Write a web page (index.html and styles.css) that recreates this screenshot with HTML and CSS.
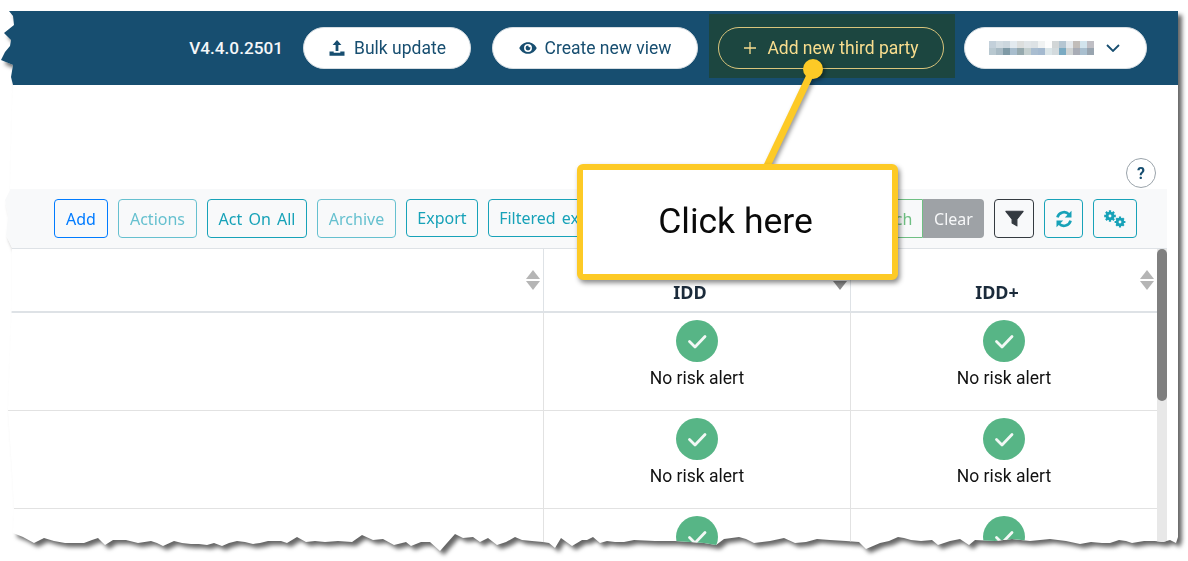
FILE: index.html
```html
<!DOCTYPE html>
<html lang="en">
<head>
<meta charset="utf-8">
<title>Add new third party</title>
<link rel="stylesheet" href="styles.css">
</head>
<body>
<div class="shot">
  <div class="paper">
    <div class="sheet">
      <header class="topbar">
        <span class="version">V4.4.0.2501</span>
        <button class="pill pill-bulk">
          <svg class="pill-icon" viewBox="0 0 18 18" width="18" height="18"><path d="M9 1 4.600 6h3v6h2.800V6h3zM1.500 12.500h4.200v1.200h6.600v-1.200h4.200v4.300h-15z"/></svg>
          Bulk update
        </button>
        <button class="pill pill-view">
          <svg class="pill-icon" viewBox="0 0 20 14" width="18" height="14"><path fill-rule="evenodd" d="M10 .5C5.600.5 2 3.300.3 7 2 10.700 5.600 13.500 10 13.500s8-2.800 9.700-6.500C18 3.300 14.400.5 10 .5zm0 10.900a4.400 4.400 0 1 1 0-8.800 4.400 4.400 0 0 1 0 8.800zM10 4.300a2.700 2.700 0 1 0 2.700 2.700c0-.4-.1-.8-.3-1.100a1.300 1.300 0 0 1-1.900-1.500c-.2-.1-.3-.1-.5-.1z"/></svg>
          Create new view
        </button>
        <div class="spotlight">
          <button class="pill pill-add">
            <svg viewBox="0 0 14 14" width="14" height="14"><path d="M7 1v12M1 7h12" fill="none" stroke="currentColor" stroke-width="1.300"/></svg>
            Add new third party
          </button>
        </div>
        <button class="pill pill-user">
          <svg class="mosaic" viewBox="0 0 15 2" width="106" height="14" shape-rendering="crispEdges" aria-hidden="true">
            <rect x="0" y="0" width="1" height="1" fill="#c3d0da"/><rect x="1" y="0" width="1" height="1" fill="#d2dce2"/><rect x="2" y="0" width="1" height="1" fill="#ccd7de"/><rect x="3" y="0" width="1" height="1" fill="#e3eaef"/><rect x="4" y="0" width="1" height="1" fill="#dcdedd"/><rect x="5" y="0" width="1" height="1" fill="#e0e5e8"/><rect x="6" y="0" width="1" height="1" fill="#dde2e5"/><rect x="7" y="0" width="1" height="1" fill="#f0f2f2"/><rect x="8" y="0" width="1" height="1" fill="#fdfdfd"/><rect x="9" y="0" width="1" height="1" fill="#d2d6d7"/><rect x="10" y="0" width="1" height="1" fill="#b5c6d2"/><rect x="11" y="0" width="1" height="1" fill="#e3e8ec"/><rect x="12" y="0" width="1" height="1" fill="#c2bdb9"/><rect x="13" y="0" width="1" height="1" fill="#d2e4ed"/><rect x="14" y="0" width="1" height="1" fill="#bfbec4"/>
            <rect x="0" y="1" width="1" height="1" fill="#b8c8d0"/><rect x="1" y="1" width="1" height="1" fill="#a8bac4"/><rect x="2" y="1" width="1" height="1" fill="#7f9aa6"/><rect x="3" y="1" width="1" height="1" fill="#a8bdcd"/><rect x="4" y="1" width="1" height="1" fill="#96a9ae"/><rect x="5" y="1" width="1" height="1" fill="#c4cfcf"/><rect x="6" y="1" width="1" height="1" fill="#a9bdd0"/><rect x="7" y="1" width="1" height="1" fill="#a4b9cf"/><rect x="8" y="1" width="1" height="1" fill="#dbe5e8"/><rect x="9" y="1" width="1" height="1" fill="#d3dadd"/><rect x="10" y="1" width="1" height="1" fill="#7aaac2"/><rect x="11" y="1" width="1" height="1" fill="#cfd3d3"/><rect x="12" y="1" width="1" height="1" fill="#a8acb5"/><rect x="13" y="1" width="1" height="1" fill="#a9bfcf"/><rect x="14" y="1" width="1" height="1" fill="#98a4af"/>
          </svg>
          <svg class="chevron" viewBox="0 0 14 8" width="14" height="8"><path d="M1 1l6 6 6-6" fill="none" stroke="#174e70" stroke-width="1.800"/></svg>
        </button>
      </header>

      <div class="main">
        <div class="help-row"><span class="help">?</span></div>

        <div class="toolbar">
          <button class="tb tb-primary tb-add">Add</button>
          <button class="tb tb-info is-off tb-actions">Actions</button>
          <button class="tb tb-info tb-all">Act On All</button>
          <button class="tb tb-info is-off tb-actions">Archive</button>
          <button class="tb tb-info tb-short tb-export">Export</button>
          <button class="tb tb-info tb-short tb-filtered">Filtered export</button>
          <div class="search-group">
            <button class="tb tb-search">Search</button>
            <button class="tb tb-clear">Clear</button>
          </div>
          <button class="tb tb-dark tb-icon">
            <svg viewBox="0 0 18 18" width="19" height="19"><path d="M.8 2.200h16.400L11.300 9.600V16L6.700 13.200V9.600z" fill="#343a40" stroke="#343a40" stroke-linejoin="round"/></svg>
          </button>
          <button class="tb tb-info tb-icon tb-refresh">
            <svg viewBox="0 0 18 18" width="18" height="18" fill="none" stroke="#17a2b8" stroke-width="2.600"><path d="M2.400 7.400A6.800 6.800 0 0 1 14 4.400"/><path d="M15.600 10.600A6.800 6.800 0 0 1 4 13.600"/><path d="M16.500.8v6.700H9.800z" fill="#17a2b8" stroke="none"/><path d="M1.500 17.200v-6.700h6.700z" fill="#17a2b8" stroke="none"/></svg>
          </button>
          <button class="tb tb-info tb-icon tb-gears">
            <svg viewBox="0 0 22 18" width="22" height="18"><g fill="none" stroke="#17a2b8"><circle cx="6" cy="6" r="2.900" stroke-width="2.900"/><path d="M6 .2v2.600M6 9.200v2.600M.2 6h2.600M9.200 6h2.600M1.900 1.900l1.800 1.800M8.300 8.300l1.800 1.800M1.900 10.100l1.800-1.800M8.300 3.700l1.800-1.800" stroke-width="2.300"/><circle cx="16" cy="12" r="2.800" stroke-width="2.800"/><path d="M16 6.600v2.400M16 15v2.400M10.600 12H13M19 12h2.400M12.200 8.200l1.700 1.700M18.100 14.100l1.700 1.700M12.200 15.800l1.700-1.700M18.100 9.900l1.700-1.700" stroke-width="2.200"/></g></svg>
          </button>
        </div>

        <div class="table-wrap">
          <div class="table">
            <div class="th">
              <span class="sort"><i class="up"></i><i class="down"></i></span>
            </div>
            <div class="th th-line">
              <span class="th-label">IDD</span>
              <span class="sort"><i class="up"></i><i class="down is-on"></i></span>
            </div>
            <div class="th th-line">
              <span class="th-label">IDD+</span>
              <span class="sort"><i class="up"></i><i class="down"></i></span>
            </div>

            <div class="td"></div>
            <div class="td td-line"><svg class="ok" viewBox="0 0 42 42" width="42" height="42"><circle cx="21" cy="21" r="21"/><path d="M13.500 21.500l5.500 5.500 10-10.500"/></svg><span>No risk alert</span></div>
            <div class="td td-line"><svg class="ok" viewBox="0 0 42 42" width="42" height="42"><circle cx="21" cy="21" r="21"/><path d="M13.500 21.500l5.500 5.500 10-10.500"/></svg><span>No risk alert</span></div>

            <div class="td"></div>
            <div class="td td-line"><svg class="ok" viewBox="0 0 42 42" width="42" height="42"><circle cx="21" cy="21" r="21"/><path d="M13.500 21.500l5.500 5.500 10-10.500"/></svg><span>No risk alert</span></div>
            <div class="td td-line"><svg class="ok" viewBox="0 0 42 42" width="42" height="42"><circle cx="21" cy="21" r="21"/><path d="M13.500 21.500l5.500 5.500 10-10.500"/></svg><span>No risk alert</span></div>

            <div class="td"></div>
            <div class="td td-line"><svg class="ok" viewBox="0 0 42 42" width="42" height="42"><circle cx="21" cy="21" r="21"/><path d="M13.500 21.500l5.500 5.500 10-10.500"/></svg></div>
            <div class="td td-line"><svg class="ok" viewBox="0 0 42 42" width="42" height="42"><circle cx="21" cy="21" r="21"/><path d="M13.500 21.500l5.500 5.500 10-10.500"/></svg></div>
          </div>
          <div class="scroll"><div class="thumb"></div></div>
        </div>
      </div>
    </div>
  </div>

  <svg class="pointer" viewBox="0 0 1188 561" width="1188" height="561" aria-hidden="true">
    <path d="M813 69 766 168" fill="none" stroke="#fdca26" stroke-width="7"/>
    <circle cx="813" cy="69" r="10" fill="#fdca26"/>
  </svg>
  <div class="callout">Click here</div>
</div>
</body>
</html>
```
FILE: styles.css
```css
* { box-sizing: border-box; }
html, body { margin: 0; padding: 0; background: #fff; }
body { font-family: Roboto, "Liberation Sans", sans-serif; color: #111; overflow: hidden; }
button { font: inherit; cursor: pointer; }

.shot { position: relative; width: 1188px; height: 561px; overflow: hidden; }
.paper { height: 561px; filter: drop-shadow(4px 4px 2px rgba(0, 0, 0, .6)); }
.sheet {
  height: 561px;
  padding: 11px 10px 0 0;
  background: #fff;
  overflow: hidden;
  clip-path: polygon(9px 11px, 1178px 11px, 1178px 537px, 1176px 543px, 1170px 540px, 1163px 542px, 1155px 541px, 1144px 541px, 1132px 543px, 1126px 541px, 1119px 540px, 1110px 543px, 1102px 543px, 1091px 542px, 1080px 544px, 1066px 541px, 1050px 539px, 1030px 541px, 1012px 539px, 995px 541px, 975px 540px, 969px 545px, 960px 539px, 950px 541px, 938px 545px, 932px 540px, 921px 541px, 911px 540px, 904px 538px, 898px 537px, 889px 541px, 880px 543px, 866px 549px, 859px 542px, 846px 541px, 830px 540px, 817px 539px, 806px 542px, 795px 543px, 784px 538px, 770px 541px, 754px 543px, 746px 539px, 739px 537px, 724px 539px, 716px 545px, 704px 543px, 690px 542px, 675px 541px, 655px 541px, 634px 540px, 624px 542px, 615px 542px, 607px 541px, 600px 543px, 593px 537px, 587px 540px, 582px 540px, 572px 546px, 561px 538px, 555px 548px, 549px 543px, 543px 542px, 532px 541px, 522px 540px, 515px 537px, 506px 542px, 497px 545px, 488px 538px, 480px 542px, 473px 537px, 463px 538px, 455px 534px, 447px 543px, 440px 551px, 430px 542px, 421px 542px, 411px 546px, 406px 542px, 394px 545px, 383px 539px, 373px 540px, 362px 535px, 352px 542px, 338px 541px, 325px 542px, 315px 541px, 306px 542px, 297px 537px, 287px 543px, 281px 541px, 268px 541px, 260px 543px, 253px 544px, 245px 542px, 237px 541px, 229px 543px, 222px 546px, 214px 543px, 207px 545px, 199px 544px, 191px 544px, 182px 543px, 174px 541px, 163px 546px, 157px 543px, 151px 541px, 138px 543px, 126px 540px, 113px 540px, 105px 545px, 98px 538px, 92px 540px, 84px 543px, 77px 543px, 65px 543px, 54px 541px, 44px 538px, 34px 543px, 23px 537px, 13px 533px, 14px 508px, 12px 470px, 8px 410px, 12px 300px, 12px 248px, 6px 235px, 8px 215px, 5px 200px, 10px 190px, 12px 110px, 13px 85px, 11px 77px, 13px 65px, 1px 60px, 5px 52px, 10px 46px, 11px 40px, 4px 33px, 14px 25px, 13px 16px);
}

/* top bar */
.topbar {
  display: flex;
  align-items: center;
  justify-content: flex-end;
  height: 74px;
  padding-right: 31px;
  background: #174e70;
}
.version { font-size: 17.200px; font-weight: 500; color: #f4f7f9; }
.pill {
  display: flex;
  align-items: center;
  justify-content: center;
  gap: 8px;
  height: 42px;
  margin-left: 21px;
  padding: 0;
  border: 1px solid #d6dde2;
  border-radius: 21px;
  background: #fff;
  color: #174e70;
  font-size: 17.500px;
  white-space: nowrap;
}
.pill-bulk { width: 168px; margin-left: 20px; }
.pill-view { width: 206px; }
.pill-icon { fill: #174e70; flex: none; }
.spotlight {
  align-self: flex-start;
  height: 64px;
  margin: 3px 0 0 11px;
  padding: 13px 11px 9px 9px;
  background: #1c4640;
}
.pill-add {
  width: 226px;
  margin: 0;
  gap: 10px;
  border-color: #d9c57c;
  background: transparent;
  color: #f8dd8e;
}
.pill-user {
  width: 183px;
  margin-left: 9px;
  gap: 12px;
  justify-content: flex-start;
  padding-left: 23px;
}
.mosaic, .chevron { flex: none; }

/* main column */
.main { width: 1167px; }
.help-row { display: flex; justify-content: flex-end; align-items: flex-end; height: 104px; padding: 0 11px 1px 0; }
.help {
  display: flex;
  align-items: center;
  justify-content: center;
  width: 30px;
  height: 30px;
  border: 1px solid #9aa3aa;
  border-radius: 50%;
  background: #fff;
  color: #174e70;
  font-size: 16px;
  font-weight: 700;
}

/* toolbar */
.toolbar {
  display: flex;
  align-items: flex-start;
  gap: 10px;
  height: 60px;
  padding: 10px 30px 0 54px;
  background: #f8f9fa;
  border-bottom: 1px solid #dee2e6;
}
.tb {
  flex: none;
  height: 39px;
  padding: 0;
  border: 1px solid #17a2b8;
  border-radius: 4px;
  background: transparent;
  font-family: "Noto Sans", "Open Sans", sans-serif;
  font-size: 16px;
  word-spacing: 2px;
  color: #17a2b8;
  white-space: nowrap;
}
.tb-add { width: 54px; }
.tb-actions { width: 79px; }
.tb-all { width: 100px; }
.tb-export { width: 72px; }
.tb-filtered { width: 134px; }
.tb-short { height: 38px; }
.tb-primary { border-color: #007bff; color: #007bff; }
.is-off { opacity: .65; }
.search-group { display: flex; margin-left: auto; }
.tb-search { width: 75px; padding-left: 3px; border-color: #6fbf83; border-radius: 4px 0 0 4px; color: #6fbf83; }
.tb-clear { width: 61px; border: 0; border-radius: 0 4px 4px 0; background: #9ea2a6; color: #f6f7f8; }
.tb-icon { display: flex; align-items: center; justify-content: center; width: 40px; }
.tb-dark { border-color: #343a40; }
.tb-refresh { width: 39px; }
.tb-gears { width: 44px; }

/* table */
.table-wrap { display: flex; height: 312px; overflow: hidden; }
.table {
  display: grid;
  flex: 1;
  grid-template-columns: 543px 307px 307px;
  grid-template-rows: 64px 98px 98px 98px;
}
.th {
  position: relative;
  display: flex;
  align-items: flex-end;
  justify-content: center;
  padding: 0 14px 7px 0;
  border-bottom: 2px solid #dee2e6;
}
.th-line { border-left: 1px solid #dee2e6; }
.th-label { font-family: "Noto Sans", "Open Sans", sans-serif; font-size: 18px; line-height: 24px; font-weight: 700; color: #1b2b3b; }
.sort { position: absolute; right: 3px; top: 21px; display: flex; flex-direction: column; gap: 2px; }
.sort i { display: block; width: 0; height: 0; border-left: 7px solid transparent; border-right: 7px solid transparent; }
.sort .up { border-bottom: 9px solid #b5b5b5; }
.sort .down { border-top: 9px solid #b5b5b5; }
.sort .is-on { border-top-color: #8a8a8a; }
.td {
  display: flex;
  flex-direction: column;
  align-items: center;
  padding-top: 7px;
  border-bottom: 1px solid #e2e2e2;
  font-size: 17.500px;
  color: #111;
}
.td-line { border-left: 1px solid #e2e2e2; }
.td span { margin-top: 4px; line-height: 24px; }
.ok { flex: none; }
.ok circle { fill: #57b586; }
.ok path { fill: none; stroke: #f2f8f5; stroke-width: 2.800; stroke-linecap: round; stroke-linejoin: round; }
.scroll { width: 10px; flex: none; background: #e8e8e8; }
.thumb { height: 152px; border-radius: 5px; background: #7f7f7f; }

/* annotation */
.pointer { position: absolute; left: 0; top: 0; filter: drop-shadow(2px 2px 2px rgba(0, 0, 0, .4)); pointer-events: none; }
.callout {
  position: absolute;
  left: 577px;
  top: 164px;
  display: flex;
  align-items: center;
  justify-content: center;
  width: 321px;
  height: 116px;
  padding: 0 4px 2px 0;
  border: 6px solid #fdca26;
  border-radius: 6px;
  background: #fff;
  box-shadow: 2px 3px 5px rgba(0, 0, 0, .45);
  font-size: 35.500px;
  color: #0a0a0a;
}
```
